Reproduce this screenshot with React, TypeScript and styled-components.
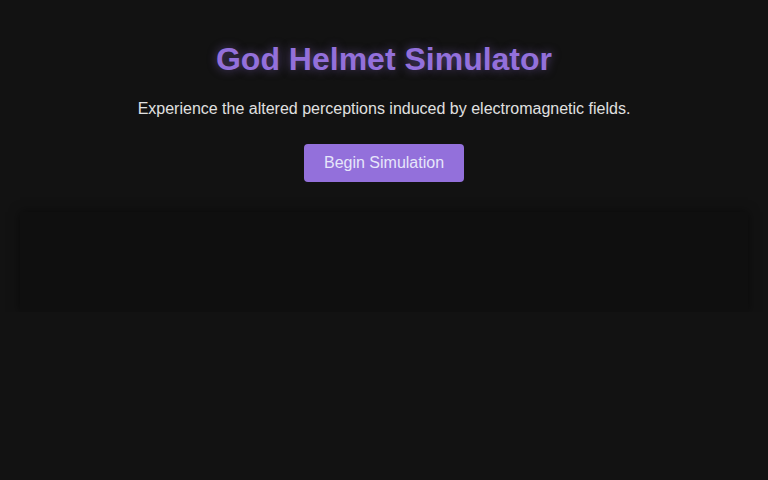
import styled, { createGlobalStyle } from "styled-components";

const GlobalStyle = createGlobalStyle`
  html, body {
    margin: 0;
    padding: 0;
    background: #121212;
    font-family: "Liberation Sans", Arial, sans-serif;
    color: #e0e0e0;
  }
`;

const Wrapper = styled.div`
  display: flex;
  flex-direction: column;
  align-items: center;
  padding: 41px 20px 0;
  text-align: center;
`;

const Title = styled.h1`
  margin: 0;
  font-size: 32px;
  line-height: 37px;
  font-weight: 700;
  color: #9370db;
  text-shadow: 0 0 10px rgba(147, 112, 219, 0.5);
`;

const Intro = styled.p`
  margin: 22px 0 0;
  font-size: 16px;
  line-height: 18px;
  color: #e0e0e0;
`;

const Button = styled.button`
  margin-top: 26px;
  padding: 10px 20px;
  font-family: inherit;
  font-size: 16px;
  line-height: 18px;
  color: #e6e6fa;
  background: #9370db;
  border: none;
  border-radius: 4px;
  cursor: pointer;
`;

const Display = styled.div`
  box-sizing: border-box;
  align-self: stretch;
  margin-top: 30px;
  height: 100px;
  background: #0f0f0f;
  box-shadow: 0 0 10px rgba(0, 0, 0, 0.5);
`;

const App = () => {
  return (
    <Wrapper>
      <GlobalStyle />
      <Title>God Helmet Simulator</Title>
      <Intro>Experience the altered perceptions induced by electromagnetic fields.</Intro>
      <Button type="button">Begin Simulation</Button>
      <Display />
    </Wrapper>
  );
};

export default App;
